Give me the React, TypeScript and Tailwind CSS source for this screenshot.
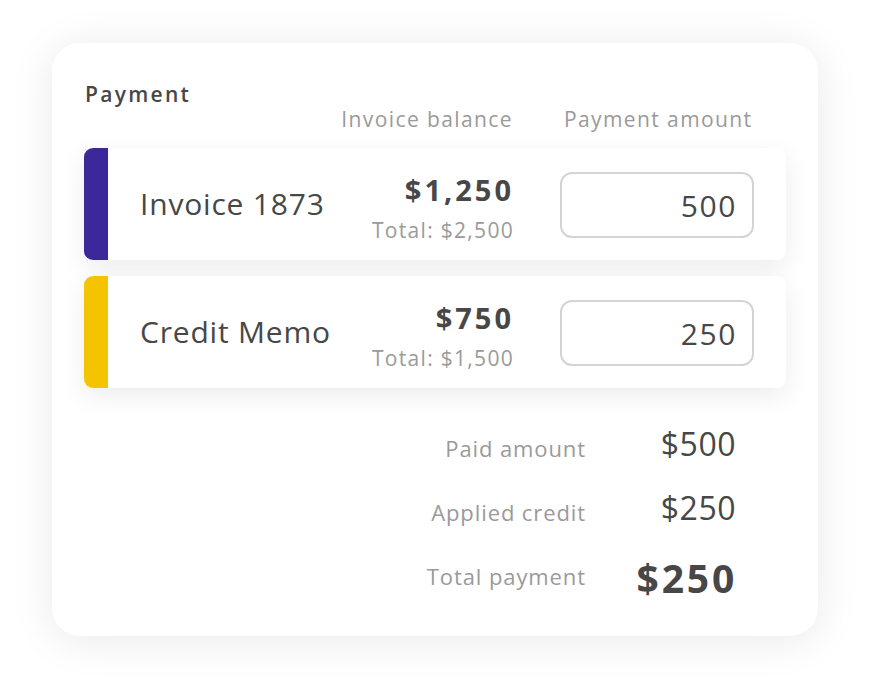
const font = { fontFamily: '"Open Sans", Lato, sans-serif' };

const rows = [
  { name: 'Invoice 1873', balance: '$1,250', total: 'Total: $2,500', amount: '500', color: 'bg-[#3c2898]' },
  { name: 'Credit Memo', balance: '$750', total: 'Total: $1,500', amount: '250', color: 'bg-[#f5c400]' },
];

const summary = [
  { label: 'Paid amount', value: '$500' },
  { label: 'Applied credit', value: '$250' },
];

export default function App() {
  return (
    <div className="w-[870px] h-[696px] bg-white pt-[43px] pl-[52px] whitespace-nowrap" style={font}>
      <div className="w-[766px] h-[593px] rounded-[28px] bg-white shadow-[0_4px_44px_rgba(0,0,0,0.09)] pt-[38px] px-[32px]">
        <div className="text-[21px] font-semibold tracking-[2.3px] text-[#474747] leading-[26px] pl-px">Payment</div>
        <div className="flex h-[28px] items-center text-[21px] tracking-[1.4px] text-[#9a9a9a] mt-[-1px]">
          <div className="w-[429px] text-right">Invoice balance</div>
          <div className="ml-[51px]">Payment amount</div>
        </div>
        <div className="mt-[14px] flex flex-col gap-4 w-[702px]">
          {rows.map((r) => (
            <div key={r.name} className="flex h-[112px] rounded-[9px] bg-white overflow-hidden shadow-[0_8px_26px_rgba(0,0,0,0.08)]">
              <div className={`w-[24px] ${r.color}`} />
              <div className="w-[200px] pl-[32px] flex items-center text-[30px] tracking-[0.8px] text-[#474747] pb-[2px]">{r.name}</div>
              <div className="w-[205px] flex flex-col items-end justify-center pt-[8px]">
                <div className="text-[29px] font-bold tracking-[3px] text-[#474747] leading-[34px] mr-[-1px]">{r.balance}</div>
                <div className="text-[21px] tracking-[1.3px] text-[#9a9a9a] leading-[26px] mt-[10px] mr-[-1px]">{r.total}</div>
              </div>
              <div className="ml-[47px] flex items-center pt-[2px]">
                <div className="w-[194px] h-[66px] rounded-[12px] border-2 border-[#d4d4d4] flex items-center justify-end pr-[15px] text-[30px] tracking-[1.6px] text-[#474747]">
                  {r.amount}
                </div>
              </div>
            </div>
          ))}
        </div>
        <div className="mt-[24px] flex flex-col">
          {summary.map((s) => (
            <div key={s.label} className="flex items-center h-[64px]">
              <div className="w-[502px] text-right text-[22px] tracking-[0.9px] text-[#9a9a9a] pt-[8px]">{s.label}</div>
              <div className="w-[150px] text-right text-[32px] tracking-[0.5px] text-[#474747]">{s.value}</div>
            </div>
          ))}
          <div className="flex items-center h-[64px]">
            <div className="w-[502px] text-right text-[22px] tracking-[0.9px] text-[#9a9a9a] pt-[8px]">Total payment</div>
            <div className="w-[151px] text-right text-[39px] font-bold tracking-[2.8px] text-[#474747] pt-[12px]">$250</div>
          </div>
        </div>
      </div>
    </div>
  );
}
